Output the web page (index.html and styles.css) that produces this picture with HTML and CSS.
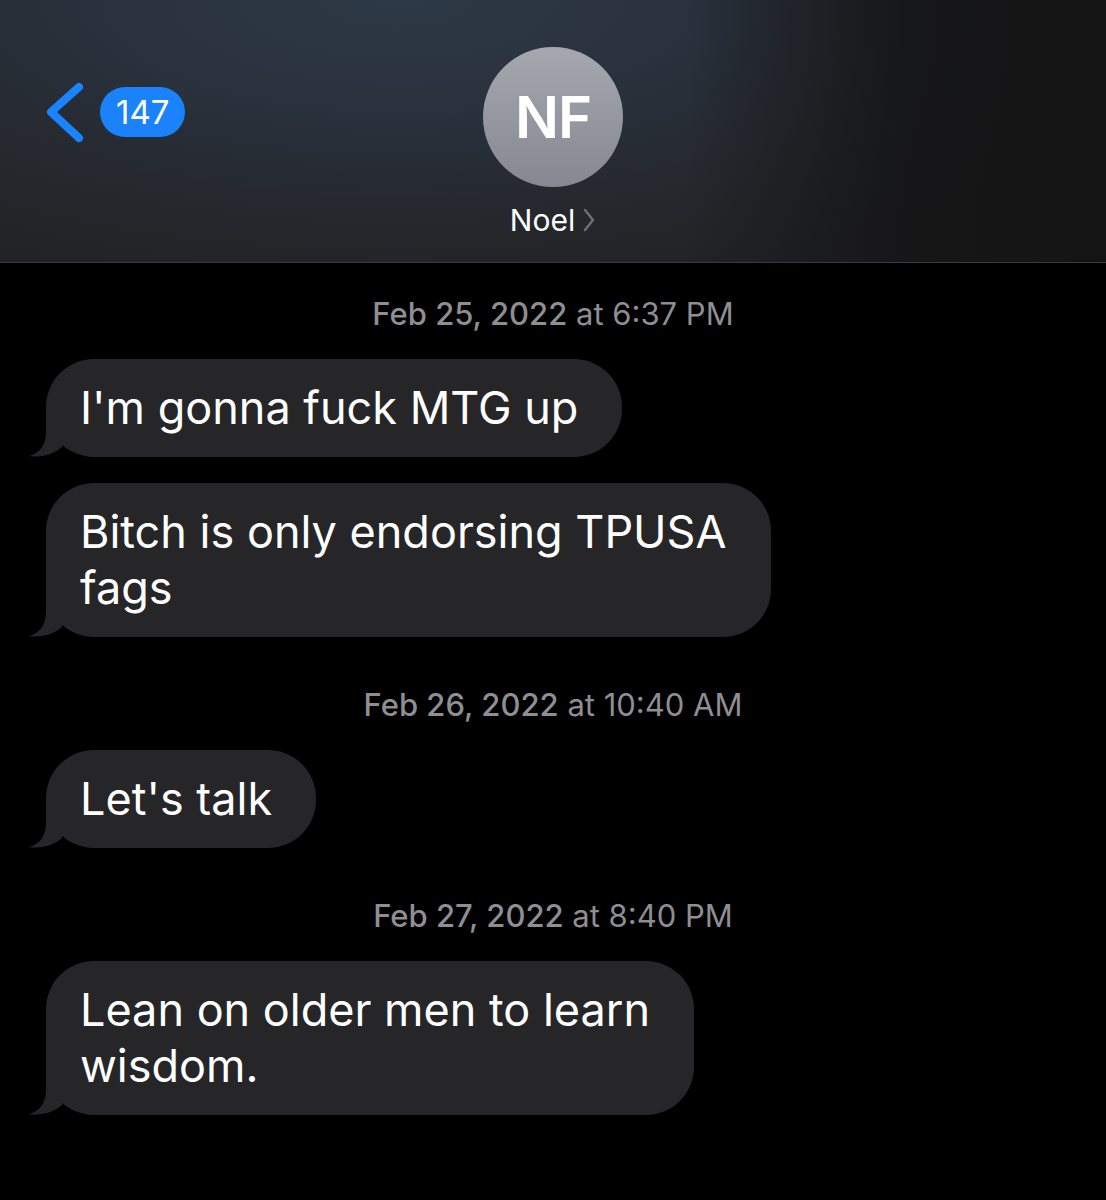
FILE: index.html
```html
<!DOCTYPE html>
<html lang="en">
<head>
<meta charset="utf-8">
<title>Noel</title>
<link rel="stylesheet" href="styles.css">
</head>
<body>
<header class="nav">
  <div class="nav-left">
    <svg class="back" width="40" height="60" viewBox="0 0 40 60" aria-hidden="true">
      <polyline points="33,5 5,30 33,56" fill="none" stroke="#1a84ff" stroke-width="8" stroke-linecap="round" stroke-linejoin="round"/>
    </svg>
    <span class="badge">147</span>
  </div>
  <div class="contact">
    <div class="avatar">NF</div>
    <div class="name">Noel <svg class="name-chev" width="14" height="26" viewBox="0 0 14 26" aria-hidden="true"><polyline points="3,3 11,13 3,23" fill="none" stroke="#6e6f74" stroke-width="2.4" stroke-linecap="round" stroke-linejoin="round"/></svg></div>
  </div>
  <div class="nav-right"></div>
</header>

<main class="thread">
  <div class="stamp"><b>Feb 25, 2022</b> at 6:37 PM</div>
  <div class="msg">
    <div class="bubble">I'm gonna fuck MTG up<svg class="tail" width="50" height="48" viewBox="0 0 50 48" aria-hidden="true"><path d="M20,0 L20,22 C20,36 14,44 3,47 C16,49 28,45 36,38 L36,0 Z" fill="#262629"/></svg></div>
  </div>
  <div class="msg">
    <div class="bubble">Bitch is only endorsing TPUSA<br>fags<svg class="tail" width="50" height="48" viewBox="0 0 50 48" aria-hidden="true"><path d="M20,0 L20,22 C20,36 14,44 3,47 C16,49 28,45 36,38 L36,0 Z" fill="#262629"/></svg></div>
  </div>

  <div class="stamp"><b>Feb 26, 2022</b> at 10:40 AM</div>
  <div class="msg">
    <div class="bubble">Let's talk<svg class="tail" width="50" height="48" viewBox="0 0 50 48" aria-hidden="true"><path d="M20,0 L20,22 C20,36 14,44 3,47 C16,49 28,45 36,38 L36,0 Z" fill="#262629"/></svg></div>
  </div>

  <div class="stamp"><b>Feb 27, 2022</b> at 8:40 PM</div>
  <div class="msg">
    <div class="bubble">Lean on older men to learn<br>wisdom.<svg class="tail" width="50" height="48" viewBox="0 0 50 48" aria-hidden="true"><path d="M20,0 L20,22 C20,36 14,44 3,47 C16,49 28,45 36,38 L36,0 Z" fill="#262629"/></svg></div>
  </div>
</main>
</body>
</html>
```

FILE: styles.css
```css
* { box-sizing: border-box; }
html, body {
  margin: 0;
  padding: 0;
  background: #000;
  font-family: Inter, "Noto Sans", "Liberation Sans", sans-serif;
  color: #fff;
}
body { width: 1106px; min-height: 1200px; }

.nav {
  height: 263px;
  display: grid;
  grid-template-columns: 1fr auto 1fr;
  border-bottom: 1px solid #3a3b3e;
  background:
    linear-gradient(to right, rgba(20,20,21,0) 0%, rgba(20,20,21,0) 62%, rgba(20,20,21,0.85) 82%, #141415 100%),
    radial-gradient(ellipse 70% 110% at 36% 0%, #2e3947 0%, #29313c 40%, #25282d 75%, #222326 100%);
}

.nav-left {
  display: flex;
  align-items: center;
  gap: 14px;
  padding-left: 46px;
  height: 224px;
}
.back { display: block; margin-top: -1px; }
.badge {
  background: #1a82fb;
  color: #fff;
  font-size: 33px;
  font-weight: 400;
  height: 50px;
  line-height: 50px;
  padding: 0 16px;
  border-radius: 25px;
}

.contact {
  display: flex;
  flex-direction: column;
  align-items: center;
  padding-top: 47px;
}
.avatar {
  width: 140px;
  height: 140px;
  border-radius: 50%;
  background: linear-gradient(to bottom, #a6a8b0, #858891);
  display: flex;
  align-items: center;
  justify-content: center;
  font-size: 58px;
  font-weight: 600;
  letter-spacing: -1px;
  color: #fff;
}
.name {
  margin-top: 15px;
  font-size: 30px;
  line-height: 36px;
  display: flex;
  align-items: center;
  gap: 7px;
}
.name-chev { display: block; }

.thread {
  display: flex;
  flex-direction: column;
  padding: 33px 0 0 46px;
}
.stamp {
  text-align: center;
  font-size: 31px;
  line-height: 36px;
  color: #8e8e93;
  margin: 0 0 27px -46px;
}
.stamp b { font-weight: 500; }
.msg + .stamp { margin-top: 50px; }

.msg { display: flex; }
.msg + .msg { margin-top: 26px; }

.bubble {
  position: relative;
  background: #262629;
  border-radius: 48px;
  padding: 21px 44px 21px 34px;
  font-size: 45px;
  line-height: 56px;
  color: #fff;
}
.tail {
  position: absolute;
  left: -20px;
  bottom: 0;
  display: block;
}
```
